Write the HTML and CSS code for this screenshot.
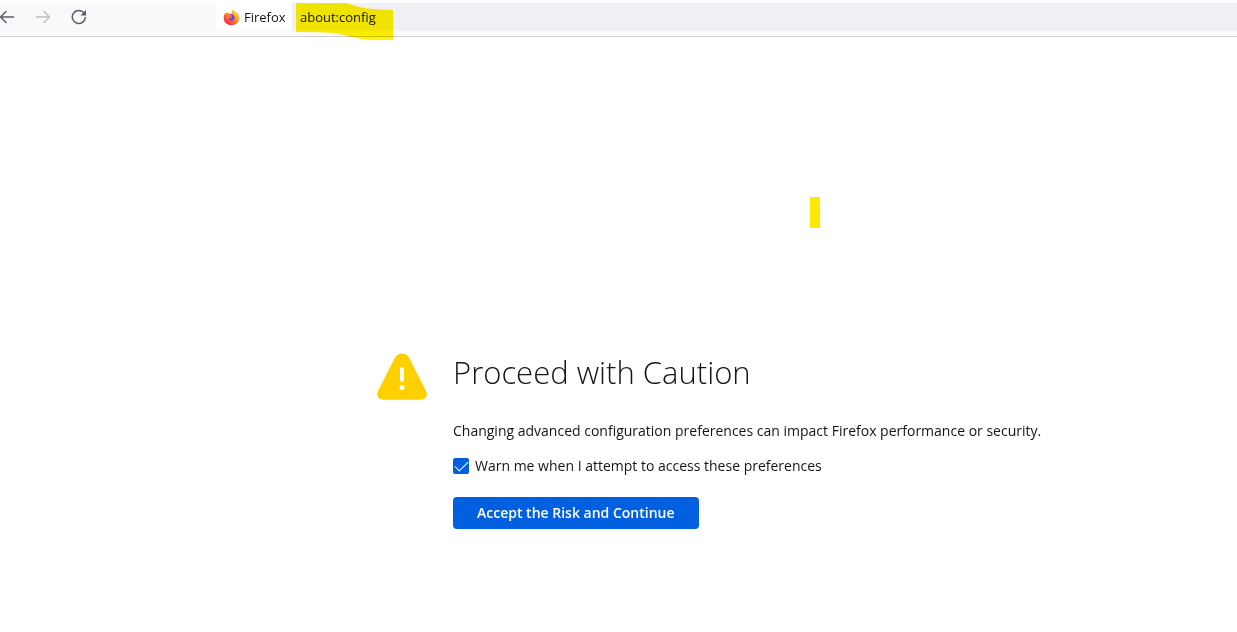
FILE: index.html
```html
<!DOCTYPE html>
<html lang="en">
<head>
    <meta charset="UTF-8">
    <meta name="viewport" content="width=device-width, initial-scale=1.0">
    <title>about:config</title>
    <link rel="stylesheet" href="styles.css">
</head>
<body>
    <header class="toolbar">
        <nav class="nav-buttons">
            <button type="button" class="nav-button" aria-label="Back">
                <svg width="16" height="16" viewBox="0 0 16 16"><path d="M14.500 8H2M7 2.500 1.500 8 7 13.500"/></svg>
            </button>
            <button type="button" class="nav-button" aria-label="Forward" disabled>
                <svg width="16" height="16" viewBox="0 0 16 16"><path d="M1.500 8H14M9 2.500 14.500 8 9 13.500"/></svg>
            </button>
            <button type="button" class="nav-button" aria-label="Reload">
                <svg width="16" height="16" viewBox="0 0 16 16"><path d="M14.300 8.500A6.500 6.500 0 1 1 12.300 3.300"/><path class="reload-tip" d="M15 1v5.500H9.500z"/></svg>
            </button>
        </nav>
        <div class="urlbar">
            <div class="identity">
                <svg class="logo" width="17" height="17" viewBox="0 0 17 17">
                    <defs>
                        <linearGradient id="flame" x1="0.850" y1="0.100" x2="0.200" y2="0.950">
                            <stop offset="0" stop-color="#ffe04a"/>
                            <stop offset="0.400" stop-color="#ff9a28"/>
                            <stop offset="0.750" stop-color="#ff4b3c"/>
                            <stop offset="1" stop-color="#f02a5c"/>
                        </linearGradient>
                    </defs>
                    <path fill="url(#flame)" d="M9.500.4c1.600.8 2.500 2 3 3.200.5-.1.700-.3.800-.7 2 1.500 3 3.600 3 5.900 0 4.300-3.500 7.400-7.800 7.400S.7 13.200.7 8.900c0-2.200.6-4.100 1.900-5.500l.5 1.300c.6-.8 1.300-1.300 2.200-1.500l.2 1.600c1-.4 2.200-.3 3.200.1 0-1.700.1-3.100.8-4.500z"/>
                    <path fill="#7048c8" d="M5.500 6c1.800-1.200 5-1.100 6 1.200.9 2.300-.5 4.400-2.800 4.400-2 0-3.500-1.200-3.700-2.800 1 .7 2.500.6 3.600-.2L9 7.600 6.500 7.200z"/>
                    <path fill="#ff7a2a" d="M2.700 5.200c1.500-.8 3-.5 3.700.6.8 0 1.700.1 2.400.7-.2 1.100-1.500 1.100-1.900 2.200-.3 1-1.500 1.400-2.800 1z"/>
                </svg>
                <span>Firefox</span>
            </div>
            <div class="address">
                <input type="text" class="address-input" value="about:config" aria-label="Address">
                <svg class="marker" width="97" height="37" viewBox="0 0 97 37"><path d="M0 0h49c8 2 16 5 27 6l21 1v30H76C58 36 50 32 38 30c-12-1-25-1-38-1z"/></svg>
            </div>
        </div>
    </header>

    <main class="warning">
        <span class="stray-mark"></span>
        <svg class="warning-icon" width="50" height="48" viewBox="0 0 50 48">
            <path fill="#ffd000" d="M25 .5c3.200 0 5.800 1.600 7.300 4.400l16.700 33c2.200 4.300-.4 8.900-5 8.900H6c-4.600 0-7.200-4.600-5-8.900l16.700-33C19.200 2.100 21.800.5 25 .5z"/>
            <path stroke="#fff" stroke-width="4" stroke-linecap="round" d="M25 16v11"/>
            <circle cx="25" cy="34.500" r="2.500" fill="#fff"/>
        </svg>
        <div class="warning-content">
            <h1>Proceed with Caution</h1>
            <p>Changing advanced configuration preferences can impact Firefox performance or security.</p>
            <div class="check-row">
                <input type="checkbox" id="showWarning" checked>
                <label for="showWarning">Warn me when I attempt to access these preferences</label>
            </div>
            <button type="button" class="accept-button">Accept the Risk and Continue</button>
        </div>
    </main>
</body>
</html>
```

FILE: styles.css
```css
* {
    margin: 0;
    padding: 0;
    box-sizing: border-box;
}

body {
    font-family: "Segoe UI", "Open Sans", sans-serif;
    font-size: 14px;
    line-height: 20px;
    color: #15141a;
    background: #fff;
}

button,
input {
    font: inherit;
    color: inherit;
}

.toolbar {
    display: flex;
    height: 34px;
    margin-top: 3px;
    background: #f9f9fb;
    border-bottom: 1px solid #ccccd1;
}

.nav-buttons {
    display: flex;
    flex: 0 0 216px;
    gap: 20px;
    height: 28px;
}

.nav-button {
    display: flex;
    align-items: center;
    width: 16px;
    border: none;
    background: none;
}

.nav-button:first-child {
    margin-left: -1px;
}

.nav-button svg {
    fill: none;
    stroke: #5b5b66;
    stroke-width: 1.5;
    stroke-linecap: round;
    stroke-linejoin: round;
}

.nav-button:disabled svg {
    stroke: #bfbfc4;
}

.nav-button .reload-tip {
    fill: #5b5b66;
    stroke: none;
}

.urlbar {
    display: flex;
    flex: 1;
    gap: 4px;
    height: 28px;
    background: #f0f0f4;
    font-size: 13px;
}

.identity {
    display: flex;
    align-items: center;
    gap: 4px;
    width: 76px;
    padding-left: 7px;
    background: #fff;
}

.logo {
    flex: none;
}

.address {
    position: relative;
    flex: 1;
}

.address-input {
    width: 100%;
    height: 28px;
    padding: 0 4px;
    border: none;
    outline: none;
    background: none;
}

/* highlighter stroke over the address */
.marker {
    position: absolute;
    top: 0;
    left: 0;
    fill: #fff200;
    mix-blend-mode: multiply;
    pointer-events: none;
}

.warning {
    position: relative;
    display: flex;
    align-items: flex-start;
    gap: 26px;
    padding: 311px 24px 40px 377px;
}

.stray-mark {
    position: absolute;
    top: 160px;
    left: 810px;
    width: 10px;
    height: 31px;
    background: #ffe800;
}

.warning-icon {
    flex: none;
    margin-top: 5px;
}

h1 {
    margin-bottom: 25px;
    font-size: 31px;
    font-weight: 300;
    line-height: 48px;
}

.warning-content p {
    margin-bottom: 15px;
}

.check-row {
    display: flex;
    align-items: center;
    gap: 6px;
    margin-bottom: 21px;
}

.check-row input {
    display: grid;
    place-items: center;
    width: 16px;
    height: 16px;
    border-radius: 2px;
    background: #0060df;
    appearance: none;
}

.check-row input:checked::before {
    content: "";
    width: 12px;
    height: 6px;
    margin-bottom: 4px;
    border: solid #fff;
    border-width: 0 0 1px 1px;
    transform: rotate(-45deg);
}

.accept-button {
    height: 32px;
    padding: 0 24px;
    border: none;
    border-radius: 4px;
    background: #0060df;
    color: #fff;
    font-weight: 600;
}
```
